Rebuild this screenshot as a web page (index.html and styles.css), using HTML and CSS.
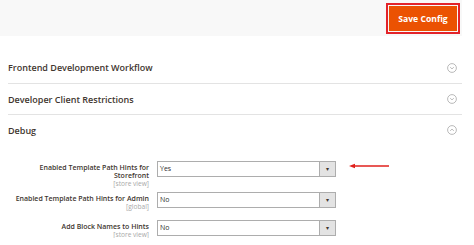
FILE: index.html
```html
<!DOCTYPE html>
<html>
<head>
<meta charset="utf-8">
<link rel="stylesheet" href="styles.css">
</head>
<body>
<div class="topbar">
  <div class="save-outline"><button class="save-btn">Save Config</button></div>
</div>
<div class="content">
  <div class="section">
    <span class="section-title">Frontend Development Workflow</span>
    <svg class="toggle" width="10" height="10" viewBox="0 0 10 10"><circle cx="5" cy="5" r="4.4" fill="none" stroke="#a8a8a8" stroke-width="0.8"/><path d="M3.2 4.2 L5 5.9 L6.8 4.2" fill="none" stroke="#a8a8a8" stroke-width="0.8"/></svg>
  </div>
  <div class="section">
    <span class="section-title">Developer Client Restrictions</span>
    <svg class="toggle" width="10" height="10" viewBox="0 0 10 10"><circle cx="5" cy="5" r="4.4" fill="none" stroke="#a8a8a8" stroke-width="0.8"/><path d="M3.2 4.2 L5 5.9 L6.8 4.2" fill="none" stroke="#a8a8a8" stroke-width="0.8"/></svg>
  </div>
  <div class="section open">
    <span class="section-title">Debug</span>
    <svg class="toggle" width="10" height="10" viewBox="0 0 10 10"><circle cx="5" cy="5" r="4.4" fill="none" stroke="#a8a8a8" stroke-width="0.8"/><path d="M3.2 5.8 L5 4.1 L6.8 5.8" fill="none" stroke="#a8a8a8" stroke-width="0.8"/></svg>
  </div>
  <div class="form">
    <div class="row row1">
      <div class="label">Enabled Template Path Hints for<br>Storefront<span class="scope">[store view]</span></div>
      <div class="select"><span class="value">Yes</span><span class="arrow">▾</span></div>
      <svg class="annot" width="40" height="6" viewBox="0 0 40 6"><path d="M0 3 L6 0.8 L6 5.2 Z" fill="#e0201c"/><line x1="5" y1="3" x2="40" y2="3" stroke="#e0201c" stroke-width="1.3"/></svg>
    </div>
    <div class="row row2">
      <div class="label">Enabled Template Path Hints for Admin<span class="scope">[global]</span></div>
      <div class="select"><span class="value">No</span><span class="arrow">▾</span></div>
    </div>
    <div class="row row3">
      <div class="label">Add Block Names to Hints<span class="scope">[store view]</span></div>
      <div class="select"><span class="value">No</span><span class="arrow">▾</span></div>
    </div>
  </div>
</div>
</body>
</html>
```
FILE: styles.css
```css
html, body {
  margin: 0;
  padding: 0;
  background: #ffffff;
  font-family: "Open Sans", "Liberation Sans", sans-serif;
  color: #303030;
}
.topbar {
  width: 462px;
  height: 36px;
  background: #f8f8f8;
  display: flex;
  justify-content: flex-end;
  align-items: flex-start;
  box-sizing: border-box;
  padding-top: 3px;
  padding-right: 2px;
}
.save-outline {
  border: 2px solid #e3232a;
  padding: 1px;
  display: flex;
}
.save-btn {
  width: 68px;
  height: 25px;
  background: #eb5202;
  border: none;
  color: #ffffff;
  font-family: "Open Sans", "Liberation Sans", sans-serif;
  font-weight: 700;
  font-size: 8.6px;
  padding: 0;
}
.content {
  width: 454px;
  margin-left: 8px;
  padding-top: 16px;
}
.section {
  height: 31px;
  border-bottom: 1px solid #e3e3e3;
  display: flex;
  align-items: center;
  justify-content: space-between;
}
.section + .section {
  height: 30px;
}
.section.open {
  border-bottom: none;
}
.section-title {
  font-size: 9px;
  font-weight: 600;
  color: #41362f;
}
.toggle {
  margin-right: 5px;
}
.form {
  padding-top: 16px;
  margin-left: -8px;
}
.row {
  display: flex;
  align-items: flex-start;
}
.row1 { height: 31px; }
.row2 { height: 28px; }
.label {
  width: 149px;
  text-align: right;
  font-size: 7px;
  font-weight: 600;
  line-height: 8px;
  color: #41362f;
  padding-top: 3px;
}
.scope {
  display: block;
  font-size: 6.6px;
  font-weight: 400;
  line-height: 7px;
  color: #a8a8a8;
}
.select {
  margin-left: 8px;
  width: 179px;
  height: 16px;
  box-sizing: border-box;
  border: 1px solid #adadad;
  display: flex;
  align-items: stretch;
  justify-content: space-between;
}
.value {
  font-size: 7px;
  line-height: 14px;
  padding-left: 2px;
  color: #303030;
}
.arrow {
  width: 15px;
  background: #e3e3e3;
  border-left: 1px solid #adadad;
  font-size: 6px;
  line-height: 14px;
  text-align: center;
  color: #41362f;
}
.annot {
  margin-left: 13px;
  margin-top: 2px;
}
```
